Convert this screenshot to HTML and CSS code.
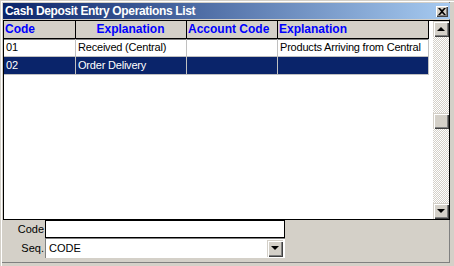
FILE: index.html
```html
<!DOCTYPE html>
<html>
<head>
<meta charset="utf-8">
<link rel="stylesheet" href="styles.css">
</head>
<body>
<div class="window">
  <div class="titlebar">
    <span class="title">Cash Deposit Entry Operations List</span>
    <span class="close"><svg width="8" height="7" viewBox="0 0 8 7"><path d="M0 0h2l2 2 2-2h2L5 3.5 8 7H6L4 5 2 7H0l3-3.5z" fill="#000"/></svg></span>
  </div>
  <div class="grid">
    <div class="table">
      <div class="row head">
        <div class="c c1">Code</div>
        <div class="c c2 center">Explanation</div>
        <div class="c c3">Account Code</div>
        <div class="c c4">Explanation</div>
      </div>
      <div class="row">
        <div class="c c1">01</div>
        <div class="c c2">Received (Central)</div>
        <div class="c c3"></div>
        <div class="c c4">Products Arriving from Central</div>
      </div>
      <div class="row sel">
        <div class="c c1">02</div>
        <div class="c c2">Order Delivery</div>
        <div class="c c3"></div>
        <div class="c c4"></div>
      </div>
    </div>
    <div class="vscroll">
      <div class="sbtn"><span class="arrow up"></span></div>
      <div class="track">
        <div class="thumb"></div>
      </div>
      <div class="sbtn"><span class="arrow down"></span></div>
    </div>
  </div>
  <div class="panel">
    <div class="field">
      <label class="lbl">Code</label>
      <div class="input"></div>
    </div>
    <div class="field">
      <label class="lbl">Seq.</label>
      <div class="combo">
        <span class="ctext">CODE</span>
        <span class="sbtn dd"><span class="arrow down"></span></span>
      </div>
    </div>
  </div>
</div>
</body>
</html>
```
FILE: styles.css
```css
* { box-sizing: border-box; }
html, body { margin: 0; padding: 0; }
body { background: #d4d0c8; font-family: "Liberation Sans", Arial, sans-serif; font-size: 11px; }

.window {
  width: 454px; height: 266px;
  background: #d4d0c8;
  padding: 3px 4px 3px 3px;
  display: flex; flex-direction: column;
  box-shadow: inset 1px 1px 0 #d4d0c8, inset 2px 2px 0 #fff, inset -4px -3px 0 #d4d0c8, inset -5px -4px 0 #808080;
}

.titlebar {
  height: 16px;
  background: linear-gradient(to right, #0a246a, #a6caf0);
  display: flex; align-items: center; justify-content: space-between;
  padding: 0 2px 0 2px;
  flex: none;
}
.title { color: #fff; font-weight: bold; font-size: 12px; letter-spacing: -0.35px; line-height: 16px; }
.close {
  width: 12px; height: 11px;
  background: #d4d0c8;
  box-shadow: inset 1px 1px 0 #fff, inset -1px -1px 0 #404040, inset -2px -2px 0 #808080;
  display: flex; align-items: center; justify-content: center;
}
.close svg { display: block; }

.grid {
  margin-top: 1px;
  height: 200px;
  background: #fff;
  border: 1px solid #000;
  display: flex;
  flex: none;
}
.table { flex: 1; }
.row { display: flex; height: 18px; border-bottom: 1px solid #c0c0c0; width: 425px; }
.row.head { height: 18px; border-bottom: 1px solid #000; box-shadow: 0 1px 0 #808080; background: #d4d0c8; }
.c { border-right: 1px solid #c0c0c0; padding: 0 2px; line-height: 17px; white-space: nowrap; overflow: hidden; letter-spacing: -0.2px; }
.head .c { color: #0000ff; font-weight: bold; font-size: 12px; border-right: 1px solid #000; padding-left: 1px; line-height: 17px; letter-spacing: 0; }
.c1 { width: 72px; }
.c2 { width: 111px; }
.c3 { width: 91px; }
.c4 { width: 151px; }
.center { text-align: center; }
.row.sel { background: #0a246a; color: #fff; }
.row:not(.head) .c1 { padding-left: 2px; }

.vscroll { width: 16px; display: flex; flex-direction: column; }
.sbtn {
  width: 16px; height: 16px;
  background: #d4d0c8;
  box-shadow: inset 1px 1px 0 #d4d0c8, inset 2px 2px 0 #fff, inset -1px -1px 0 #404040, inset -2px -2px 0 #808080;
  display: flex; align-items: center; justify-content: center;
  flex: none;
}
.arrow { width: 0; height: 0; border-left: 4px solid transparent; border-right: 4px solid transparent; }
.arrow.up { border-bottom: 4px solid #000; }
.arrow.down { border-top: 4px solid #000; }
.track {
  flex: 1;
  background-color: #fff;
  background-image: repeating-conic-gradient(#d4d0c8 0 25%, #fff 0 50%);
  background-size: 2px 2px;
  padding-top: 76px;
}
.thumb {
  width: 16px; height: 16px;
  background: #d4d0c8;
  box-shadow: inset 1px 1px 0 #d4d0c8, inset 2px 2px 0 #fff, inset -1px -1px 0 #404040, inset -2px -2px 0 #808080;
}

.panel { display: flex; flex-direction: column; padding-top: 0; }
.field { display: flex; align-items: center; }
.lbl { width: 42px; text-align: right; padding-right: 1px; }
.input { width: 240px; height: 18px; background: #fff; border: 1px solid #000; }
.combo {
  width: 240px; height: 20px; background: #fff;
  box-shadow: inset 1px 1px 0 #808080, inset -1px -1px 0 #fff;
  display: flex; align-items: center; justify-content: space-between;
  padding: 2px 2px 2px 4px;
}
.ctext { line-height: 16px; }
.dd { width: 16px; height: 17px; }
```
